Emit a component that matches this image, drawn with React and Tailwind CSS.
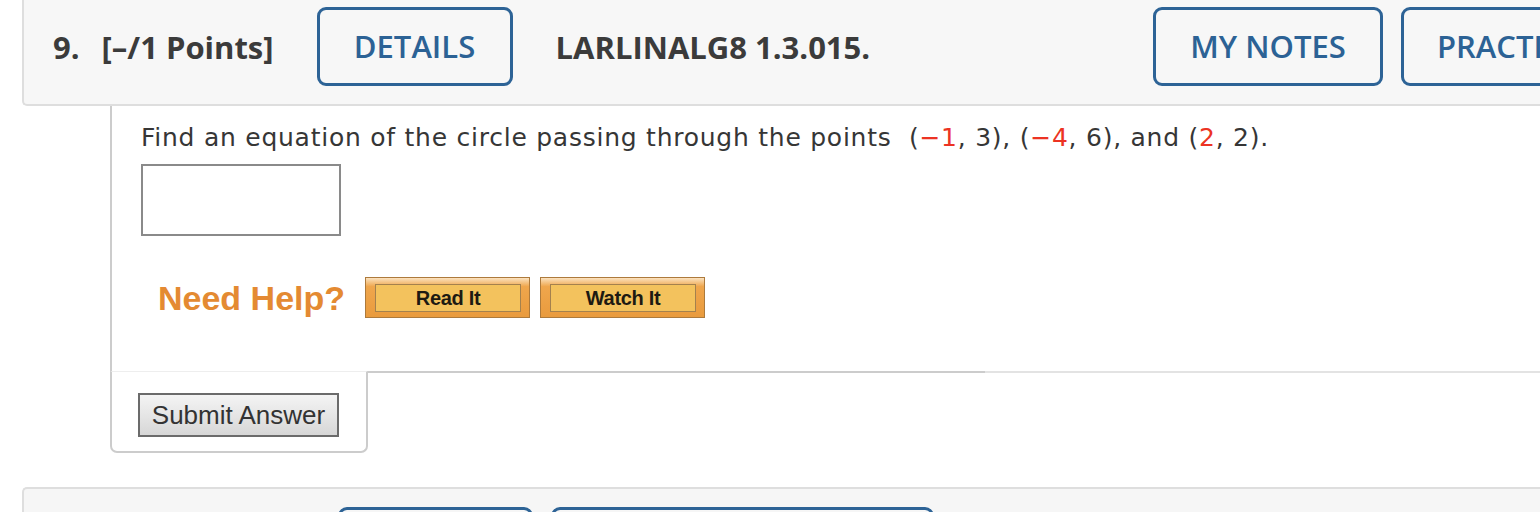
import React from "react";

function OutlineButton({ children, className = "" }) {
  return (
    <div
      className={`shrink-0 h-[79px] border-[3px] border-[#2d6396] rounded-[9px] flex items-center justify-center text-[31px] font-semibold text-[#2c6295] whitespace-nowrap ${className}`}
    >
      {children}
    </div>
  );
}

function HelpButton({ label }) {
  return (
    <div className="w-[165px] h-[41px] border border-[#ad7a3c] bg-[linear-gradient(to_bottom,#fbe2bf_0%,#efa64c_22%,#e99b3e_100%)] pt-[6px] pl-[9px] pr-[8px] pb-[5px]">
      <div className="h-full border border-[#a4814e] bg-[#f3c25d] flex items-center justify-center text-[20px] font-bold text-[#1d1a12] font-['Liberation_Sans',Arial,sans-serif] tracking-[-0.3px]">
        {label}
      </div>
    </div>
  );
}

export default function App() {
  const red = "text-[#ec3323]";
  return (
    <div className="w-[1540px] h-[512px] overflow-hidden bg-white">
      {/* question header */}
      <div className="ml-[22px] h-[106px] bg-[#f7f7f7] border-l-2 border-b-2 border-[#dedede] rounded-bl-[5px] flex items-start pt-[7px] pl-[29px] overflow-hidden font-['Open_Sans',sans-serif] text-[#3b3b3b]">
        <div className="shrink-0 w-[1100px] h-[79px] flex items-center">
          <span className="text-[31px] font-bold leading-[44px] mr-[22px]">9.</span>
          <span className="text-[31px] font-bold leading-[44px]">[–/1 Points]</span>
          <OutlineButton className="ml-[43px] w-[196px]">DETAILS</OutlineButton>
          <span className="ml-[43px] text-[31px] font-bold leading-[44px] whitespace-nowrap">LARLINALG8 1.3.015.</span>
        </div>
        <OutlineButton className="w-[230px]">MY NOTES</OutlineButton>
        <OutlineButton className="ml-[18px] w-[330px] justify-start pl-[33px]">PRACTICE ANOTHER</OutlineButton>
      </div>

      {/* question body */}
      <div className="ml-[110px] border-l-2 border-[#cccccc] pt-[17px] pl-[29px] pb-[53px]">
        <p className="font-['DejaVu_Sans',Verdana,sans-serif] text-[25px] leading-[30px] tracking-[0.75px] text-[#363636] whitespace-pre">
          {"Find an equation of the circle passing through the points  ("}
          <span className={red}>−1</span>
          {", 3), ("}
          <span className={red}>−4</span>
          {", 6), and ("}
          <span className={red}>2</span>
          {", 2)."}
        </p>
        <div className="mt-[11px] w-[200px] h-[72px] border-2 border-[#8a8a8a] bg-white" />
        <div className="mt-[41px] ml-[17px] flex items-center">
          <span className="font-['Liberation_Sans',Arial,sans-serif] text-[34px] leading-[38px] font-bold text-[#e48a32]">
            Need Help?
          </span>
          <div className="ml-[20px] flex gap-[10px]">
            <HelpButton label="Read It" />
            <HelpButton label="Watch It" />
          </div>
        </div>
      </div>

      {/* submit tab */}
      <div className="ml-[110px] flex items-start">
        <div className="shrink-0 w-[258px] h-[82px] border-2 border-t border-[#cccccc] border-t-[#eeeeee] rounded-b-[7px] pt-[21px] pl-[26px]">
          <div className="w-[201px] h-[44px] border-2 border-[#6b6b6b] bg-[linear-gradient(to_bottom,#f4f4f4,#d7d7d7)] flex items-center justify-center font-['Liberation_Sans',Arial,sans-serif] text-[26px] text-[#333333]">
            Submit Answer
          </div>
        </div>
        <div className="flex-1 flex">
          <div className="w-[617px] h-[2px] bg-[#cccccc]" />
          <div className="flex-1 h-[2px] bg-[#e3e3e3]" />
        </div>
      </div>

      {/* next question header */}
      <div className="ml-[22px] mt-[34px] h-[80px] bg-[#f6f6f6] border-l-2 border-t-2 border-[#dedede] rounded-tl-[5px] flex pt-[18px] pl-[314px] gap-[18px]">
        <div className="w-[195px] h-[79px] border-[3px] border-[#2d6396] rounded-[9px]" />
        <div className="w-[383px] h-[79px] border-[3px] border-[#2d6396] rounded-[9px]" />
      </div>
    </div>
  );
}
